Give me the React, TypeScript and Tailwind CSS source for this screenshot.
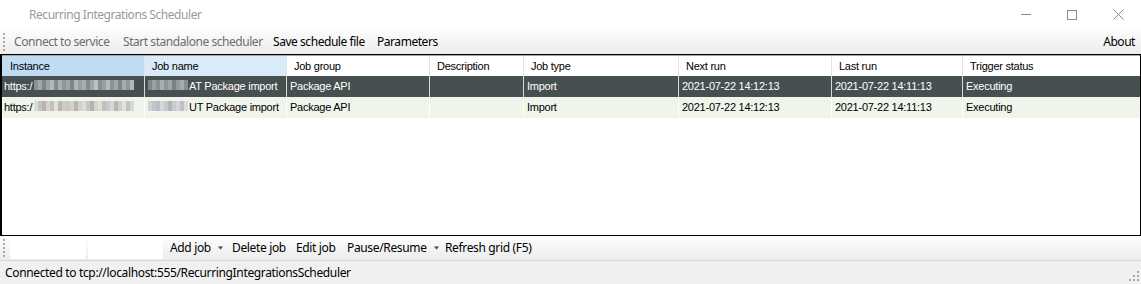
import React from "react";

const uiFont = { fontFamily: '"Noto Sans", "Open Sans", sans-serif' };
const gridFont = { fontFamily: '"Liberation Sans", Arial, sans-serif' };

const columns = [
  { title: "Instance", w: "w-[142px]" },
  { title: "Job name", w: "w-[142px]" },
  { title: "Job group", w: "w-[143px]" },
  { title: "Description", w: "w-[94px]" },
  { title: "Job type", w: "w-[155px]" },
  { title: "Next run", w: "w-[153px]" },
  { title: "Last run", w: "w-[131px]" },
  { title: "Trigger status", w: "flex-1" },
];

const darkBlur1 = ["#8d9393", "#a3a8a8", "#7f8787", "#9aa3a6", "#b4b8b8", "#858c8c", "#a9b0b2", "#8f9797", "#9ea5a5", "#7d8686", "#b0b6b6", "#96a0a3", "#a8adad", "#848b8b", "#a1a6a6", "#bcc0c0", "#8a9090", "#9aa0a0", "#b5baba", "#8c9393", "#a0a7a7", "#7f8585", "#a6acac", "#929898", "#b2b7b7"];
const darkBlur2 = ["#7f8787", "#9aa1a1", "#878e8e", "#a8aeae", "#8f9696", "#a0a6a6", "#7c8383", "#949b9b", "#a6acac", "#888f8f"];
const lightBlur1 = ["#dcdcd8", "#c5c3c0", "#b8b5b0", "#d6d2c6", "#c2c0bd", "#e2e2dc", "#bdb8ad", "#d0ccc0", "#c8c8c8", "#d9d4c0", "#b9b7b5", "#cfd2cf", "#dedbd2", "#c4c6c9", "#b5b3b3", "#d2d7d2", "#e1dfd4", "#bfc0c4", "#c9c9cc", "#d8d8d8", "#b8b6b8", "#cfcfcf", "#e0e0dc", "#c2c2c2", "#d6d6d6"];
const lightBlur2 = ["#d0d0d6", "#c4c4cc", "#bcbcc4", "#d7d7dc", "#c8c8ce", "#b4b4bc", "#cacad0", "#d5d5da", "#c0c0c6", "#dcdce0"];

function Blur({ colors }: { colors: string[] }) {
  return (
    <span className="inline-flex h-[10px]">
      {colors.map((c, i) => (
        <span key={i} className="h-full w-[4px]" style={{ backgroundColor: c }} />
      ))}
    </span>
  );
}

function Grip() {
  return (
    <div className="flex w-[8px] flex-col items-center gap-[2px]">
      {[0, 1, 2, 3, 4].map((i) => (
        <span key={i} className="h-[2px] w-[2px] bg-[#a8a8a8]" />
      ))}
    </div>
  );
}

function Caret() {
  return (
    <svg width="7" height="4" viewBox="0 0 7 4" className="ml-[6px]">
      <path d="M1 0.5h5L3.5 3.5z" fill="#444" />
    </svg>
  );
}

type Row = {
  dark: boolean;
  instBlur: string[];
  nameBlur: string[];
  name: string;
};

const rows: Row[] = [
  { dark: true, instBlur: darkBlur1, nameBlur: darkBlur2, name: "AT Package import" },
  { dark: false, instBlur: lightBlur1, nameBlur: lightBlur2, name: "UT Package import" },
];

export default function App() {
  return (
    <div className="flex h-[284px] w-[1141px] flex-col overflow-hidden bg-white text-[12px] text-black">
      {/* Title bar */}
      <div className="flex h-[29px] items-center bg-white" style={uiFont}>
        <span className="ml-[29px] text-[12px] tracking-[-0.45px] text-[#9a9a9a]">
          Recurring Integrations Scheduler
        </span>
        <div className="ml-auto flex h-full items-center">
          <div className="flex h-full w-[46px] items-center justify-center">
            <span className="h-px w-[10px] bg-[#8a8a8a]" />
          </div>
          <div className="flex h-full w-[46px] items-center justify-center">
            <span className="h-[10px] w-[10px] border border-[#8a8a8a]" />
          </div>
          <div className="flex h-full w-[46px] items-center justify-center">
            <svg width="11" height="11" viewBox="0 0 11 11">
              <path d="M0.5 0.5l10 10M10.5 0.5l-10 10" stroke="#8a8a8a" strokeWidth="1" />
            </svg>
          </div>
        </div>
      </div>

      {/* Main toolbar */}
      <div
        className="flex h-[25px] items-center bg-gradient-to-b from-[#fdfdfd] to-[#ececec] tracking-[-0.45px]"
        style={uiFont}
      >
        <Grip />
        <div className="flex h-full items-center">
          <span className="ml-[2px] w-[109px] pl-[4px] text-[#6d6d6d]">Connect to service</span>
          <span className="w-[150px] pl-[4px] text-[#6d6d6d]">Start standalone scheduler</span>
          <span className="w-[104px] pl-[4px]">Save schedule file</span>
          <span className="pl-[4px]">Parameters</span>
        </div>
        <span className="ml-auto pr-[6px]">About</span>
      </div>

      {/* Grid */}
      <div
        className="flex h-[182px] flex-col border-y border-l-2 border-r border-black bg-white tracking-[-0.25px]"
        style={gridFont}
      >
        <div className="flex h-[21px] border-t border-[#a5a5a5] text-[11px]">
          {columns.map((c, i) => (
            <div
              key={c.title}
              className={`${c.w} flex items-center pl-[7px] ${
                i === 0
                  ? "bg-[#bfdcf4] pl-[8px]"
                  : i === 1
                  ? "border-l border-[#e4e4e4] bg-[#d9eaf9]"
                  : "border-l border-[#e4e4e4] bg-white"
              }`}
            >
              {c.title}
            </div>
          ))}
        </div>
        {rows.map((r, ri) => {
          const line = r.dark ? "border-[#d8d8d8]" : "border-[#ffffff]";
          const bg = r.dark ? "bg-[#475050] text-white" : "bg-[#eff5ea] text-black";
          const cells: React.ReactNode[] = [
            <>
              <span>https:/</span>
              <span className="ml-[2px]">
                <Blur colors={r.instBlur} />
              </span>
            </>,
            <>
              <span>
                <Blur colors={r.nameBlur} />
              </span>
              <span className="ml-[1px]">{r.name}</span>
            </>,
            "Package API",
            "",
            "Import",
            "2021-07-22 14:12:13",
            "2021-07-22 14:11:13",
            "Executing",
          ];
          return (
            <div key={ri} className={`flex h-[21px] text-[11px] ${bg}`}>
              {columns.map((c, i) => (
                <div
                  key={c.title}
                  className={`${c.w} flex items-center overflow-hidden whitespace-nowrap ${
                    i === 0 ? "pl-[2px]" : `border-l ${line} pl-[3px]`
                  }`}
                >
                  {cells[i]}
                </div>
              ))}
            </div>
          );
        })}
      </div>

      {/* Bottom toolbar */}
      <div
        className="flex h-[24px] items-center bg-gradient-to-b from-[#fdfdfd] to-[#ececec] tracking-[-0.35px]"
        style={uiFont}
      >
        <Grip />
        <div className="ml-[2px] h-[22px] w-[76px] bg-white" />
        <div className="ml-[2px] h-[22px] w-[75px] bg-white" />
        <span className="ml-[3px] flex w-[62px] items-center pl-[4px]">
          Add job
          <Caret />
        </span>
        <span className="w-[64px] pl-[4px]">Delete job</span>
        <span className="w-[51px] pl-[4px]">Edit job</span>
        <span className="flex w-[98px] items-center pl-[4px]">
          Pause/Resume
          <Caret />
        </span>
        <span className="pl-[4px]">Refresh grid (F5)</span>
      </div>

      {/* Status bar */}
      <div
        className="flex flex-1 items-center border-t border-[#d7d7d7] bg-[#f0f0f0] pl-[5px] tracking-[-0.35px]"
        style={uiFont}
      >
        <span>Connected to tcp://localhost:555/RecurringIntegrationsScheduler</span>
        <svg width="11" height="11" viewBox="0 0 11 11" className="ml-auto mr-[1px] mt-[8px]">
          <rect x="8" y="0" width="2" height="2" fill="#a8a8a8" />
          <rect x="4" y="4" width="2" height="2" fill="#a8a8a8" />
          <rect x="8" y="4" width="2" height="2" fill="#a8a8a8" />
          <rect x="0" y="8" width="2" height="2" fill="#a8a8a8" />
          <rect x="4" y="8" width="2" height="2" fill="#a8a8a8" />
          <rect x="8" y="8" width="2" height="2" fill="#a8a8a8" />
        </svg>
      </div>
    </div>
  );
}
